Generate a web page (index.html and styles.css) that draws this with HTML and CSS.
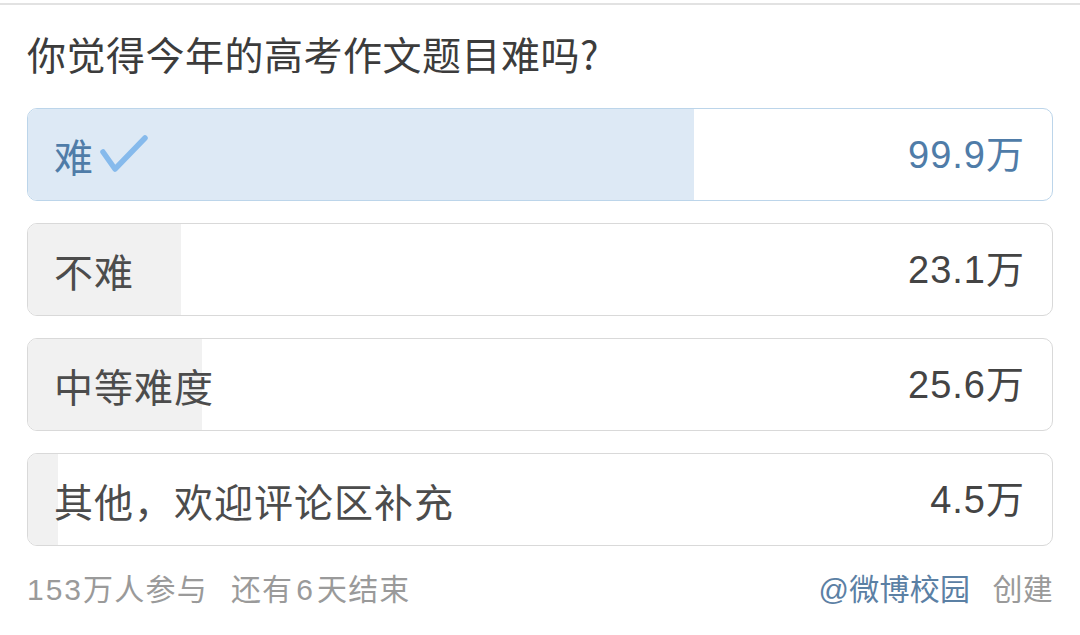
FILE: index.html
```html
<!DOCTYPE html>
<html lang="zh-CN">
<head>
<meta charset="utf-8">
<link rel="stylesheet" href="styles.css">
</head>
<body>
<div class="top-line"></div>
<div class="poll">
  <h1 class="title">你觉得今年的高考作文题目难吗?</h1>
  <div class="options">
    <div class="option selected">
      <div class="fill" style="width:65%"></div>
      <div class="label">难<svg class="check" width="50" height="40" viewBox="0 0 50 40"><path d="M4 18 L16 35 L46 4" fill="none" stroke="#86baec" stroke-width="5.5" stroke-linecap="round" stroke-linejoin="round"/></svg></div>
      <div class="value">99.9万</div>
    </div>
    <div class="option">
      <div class="fill" style="width:14.9%"></div>
      <div class="label">不难</div>
      <div class="value">23.1万</div>
    </div>
    <div class="option">
      <div class="fill" style="width:17%"></div>
      <div class="label">中等难度</div>
      <div class="value">25.6万</div>
    </div>
    <div class="option">
      <div class="fill" style="width:2.9%"></div>
      <div class="label">其他，欢迎评论区补充</div>
      <div class="value">4.5万</div>
    </div>
  </div>
  <div class="footer">
    <div class="meta"><span class="num">153</span>万人参与<span class="gap"></span>还有<span class="num six">6</span>天结束</div>
    <div class="creator"><span class="author">@微博校园</span><span class="space"></span>创建</div>
  </div>
</div>
</body>
</html>
```

FILE: styles.css
```css
html, body {
  margin: 0;
  padding: 0;
  background: #ffffff;
}
body {
  width: 1080px;
  height: 635px;
  overflow: hidden;
  font-family: "Noto Sans CJK SC", "Noto Sans", sans-serif;
}
.top-line {
  height: 2px;
  margin-top: 3px;
  background: #e2e2e2;
}
.poll {
  padding: 0 27px;
}
.title {
  margin: 25px 0 0 0;
  font-size: 39px;
  line-height: 46px;
  font-weight: 400;
  color: #3c3c3c;
  letter-spacing: 0.5px;
}
.options {
  margin-top: 32px;
  display: flex;
  flex-direction: column;
  gap: 22px;
}
.option {
  position: relative;
  box-sizing: border-box;
  height: 93px;
  border: 1px solid #d9d9d9;
  border-radius: 10px;
  overflow: hidden;
  display: flex;
  align-items: center;
  justify-content: space-between;
  padding: 0 27px 0 26px;
  background: #ffffff;
}
.fill {
  position: absolute;
  left: 0;
  top: 0;
  bottom: 0;
  background: #f1f1f1;
}
.selected {
  border-color: #bcd5ea;
}
.selected .fill {
  background: #dde9f5;
}
.label, .value {
  position: relative;
  font-size: 39px;
  line-height: 46px;
  color: #4c4c4c;
  display: flex;
  align-items: center;
}
.label {
  letter-spacing: 1px;
}
.value {
  font-family: "Liberation Sans", "Noto Sans CJK SC", sans-serif;
  font-size: 38px;
  color: #444444;
  letter-spacing: 1px;
}
.selected .label, .selected .value {
  color: #4f7ca8;
}
.check {
  margin-left: 5px;
  margin-top: -2px;
}
.footer {
  margin-top: 24px;
  display: flex;
  justify-content: space-between;
  align-items: center;
  font-family: "Liberation Sans", "Noto Sans CJK SC", sans-serif;
  font-size: 30px;
  line-height: 40px;
  color: #9a9a9a;
}
.meta {
  letter-spacing: 1.2px;
}
.num {
  letter-spacing: 2px;
}
.six {
  padding-left: 3px;
  letter-spacing: 4px;
}
.gap {
  display: inline-block;
  width: 23px;
}
.creator {
  letter-spacing: 0.3px;
}
.author {
  color: #5b80a4;
}
.space {
  display: inline-block;
  width: 22px;
}
```
